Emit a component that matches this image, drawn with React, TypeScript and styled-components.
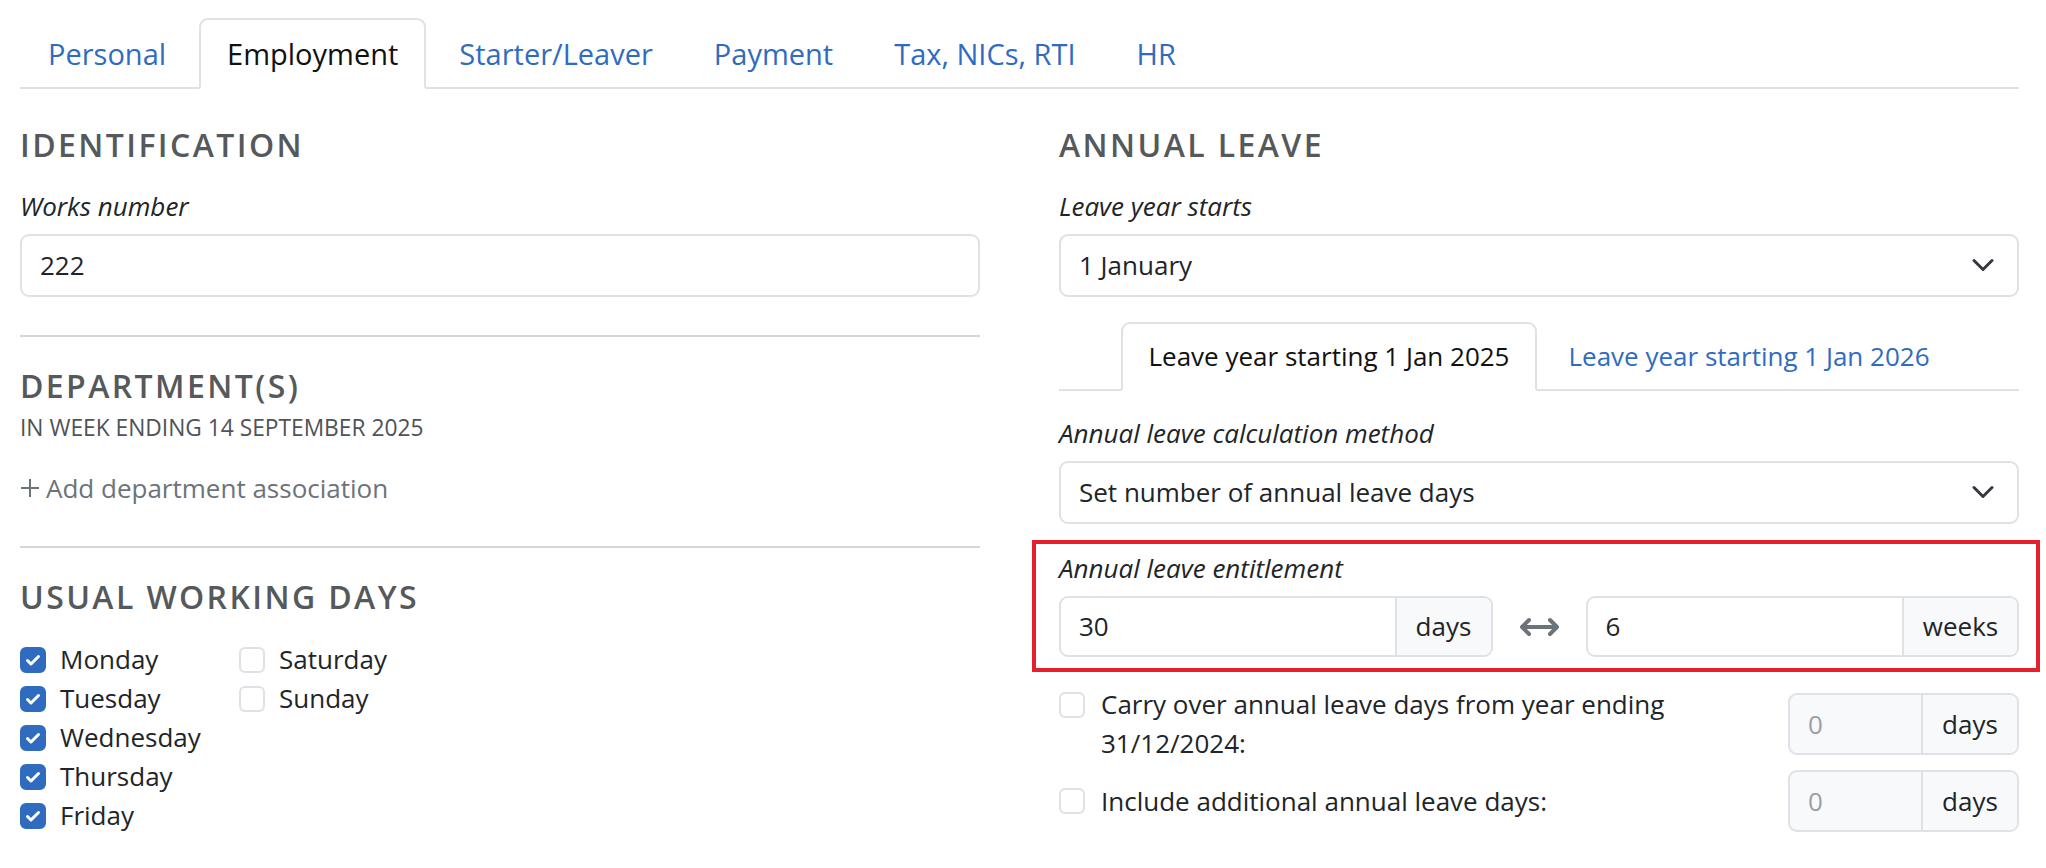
import React from 'react';
import styled, { createGlobalStyle } from 'styled-components';

const GlobalStyle = createGlobalStyle`
  * { box-sizing: border-box; }
  body {
    margin: 0;
    background: #fff;
    color: #212529;
    font-family: "Open Sans", "Noto Sans", sans-serif;
    font-size: 26px;
    line-height: 1.5;
  }
`;

const Page = styled.div`
  padding: 18px 27px 0 20px;
`;

const TabBar = styled.nav<{ $centered?: boolean }>`
  display: flex;
  gap: 5px;
  justify-content: ${(p) => (p.$centered ? 'center' : 'flex-start')};
  border-bottom: 2px solid #dee2e6;
`;

const Tab = styled.div<{ $active?: boolean; $small?: boolean }>`
  margin-bottom: -2px;
  padding: ${(p) => (p.$small ? '13px 25px' : '12px 26px')};
  font-size: ${(p) => (p.$small ? '26px' : '29px')};
  line-height: ${(p) => (p.$small ? '39px' : '43px')};
  white-space: nowrap;
  color: ${(p) => (p.$active ? '#111' : '#2f6cbf')};
  background: ${(p) => (p.$active ? '#fff' : 'transparent')};
  border: 2px solid ${(p) => (p.$active ? '#dee2e6' : 'transparent')};
  border-bottom-color: ${(p) => (p.$active ? '#fff' : 'transparent')};
  border-radius: 9px 9px 0 0;
`;

const Columns = styled.div`
  display: grid;
  grid-template-columns: 1fr 1fr;
  column-gap: 79px;
  padding-top: 37px;
`;

const Column = styled.div`
  display: flex;
  flex-direction: column;
`;

const SectionTitle = styled.h2`
  margin: 0 0 23px;
  font-size: 32px;
  font-weight: 600;
  line-height: 1.2;
  letter-spacing: 2.4px;
  text-transform: uppercase;
  color: #56595c;
`;

const SubTitle = styled.div`
  margin: -18px 0 24px;
  font-size: 22.75px;
  text-transform: uppercase;
  color: #4f5357;
`;

const Label = styled.div`
  margin-bottom: 8px;
  font-style: italic;
  color: #212529;
`;

const TextBox = styled.div`
  display: flex;
  align-items: center;
  justify-content: space-between;
  height: 63px;
  padding: 0 23px 0 18px;
  border: 2px solid #dee2e6;
  border-radius: 9px;
  background: #fff;
`;

const Divider = styled.hr`
  margin: 38px 0 30px;
  border: 0;
  border-top: 2px solid #d3d7db;
`;

const AddLink = styled.div`
  display: flex;
  align-items: center;
  gap: 6px;
  color: #6c737a;
`;

const DaysGrid = styled.div`
  display: grid;
  grid-template-columns: 219px auto;
  justify-content: start;
  margin-top: 1px;
`;

const DayList = styled.div`
  display: flex;
  flex-direction: column;
`;

const CheckRow = styled.label`
  display: flex;
  align-items: flex-start;
  gap: 14px;
`;

const Box = styled.span<{ $checked?: boolean }>`
  flex: none;
  display: flex;
  align-items: center;
  justify-content: center;
  width: 26px;
  height: 26px;
  margin-top: 6.5px;
  border-radius: 6px;
  border: 2px solid ${(p) => (p.$checked ? '#2f6cbf' : '#dee2e6')};
  background: ${(p) => (p.$checked ? '#2f6cbf' : '#fff')};
`;

const Tabs2 = styled.div`
  margin: 25px 0 23px;
`;

const Highlight = styled.div`
  margin: 16px -21px 0 -27px;
  padding: 5px 17px 11px 23px;
  border: 4px solid #e5202b;
`;

const EntitlementRow = styled.div`
  display: grid;
  grid-template-columns: 1fr auto 1fr;
  align-items: center;
  column-gap: 26px;
`;

const Group = styled.div<{ $disabled?: boolean; $width?: number }>`
  display: flex;
  height: ${(p) => (p.$disabled ? '62px' : '61px')};
  width: ${(p) => (p.$width ? `${p.$width}px` : 'auto')};
  border: 2px solid #dee2e6;
  border-radius: 9px;
  overflow: hidden;
  background: ${(p) => (p.$disabled ? '#f8f9fa' : '#fff')};
`;

const GroupInput = styled.div<{ $muted?: boolean }>`
  flex: 1;
  display: flex;
  align-items: center;
  padding: 0 18px;
  color: ${(p) => (p.$muted ? '#9a9fa4' : '#212529')};
`;

const Addon = styled.div<{ $w: number }>`
  flex: none;
  width: ${(p) => p.$w}px;
  display: flex;
  align-items: center;
  justify-content: center;
  border-left: 2px solid #dee2e6;
  background: #f8f9fa;
  color: #212529;
`;

const OptionRows = styled.div`
  display: flex;
  flex-direction: column;
  gap: 7px;
  margin-top: 13px;
`;

const OptionRow = styled.div`
  display: grid;
  grid-template-columns: 2fr 1fr;
  align-items: center;
`;

const OptionLabel = styled.label`
  display: flex;
  align-items: flex-start;
  gap: 16px;
`;

const RightGroup = styled.div`
  justify-self: end;
`;

const Check = () => (
  <svg width="16" height="14" viewBox="0 0 16 14">
    <path d="M2.5 7.5 L6 11 L13.5 3.5" fill="none" stroke="#fff" strokeWidth="3" strokeLinecap="round" strokeLinejoin="round" />
  </svg>
);

const Chevron = () => (
  <svg width="22" height="15" viewBox="0 0 22 15">
    <path d="M2 2.5 L11 11.5 L20 2.5" fill="none" stroke="#343a40" strokeWidth="3" strokeLinecap="round" strokeLinejoin="round" />
  </svg>
);

const SwapArrow = () => (
  <svg width="41" height="26" viewBox="0 0 41 26">
    <path d="M3 13 H38 M10 6 L3 13 L10 20 M31 6 L38 13 L31 20" fill="none" stroke="#6c737a" strokeWidth="4" strokeLinecap="round" strokeLinejoin="round" />
  </svg>
);

const Plus = () => (
  <svg width="20" height="20" viewBox="0 0 20 20">
    <path d="M10 1 V19 M1 10 H19" stroke="#6c737a" strokeWidth="2" />
  </svg>
);

const Day = ({ name, checked }: { name: string; checked?: boolean }) => (
  <CheckRow>
    <Box $checked={checked}>{checked && <Check />}</Box>
    <span>{name}</span>
  </CheckRow>
);

const mainTabs = ['Personal', 'Employment', 'Starter/Leaver', 'Payment', 'Tax, NICs, RTI', 'HR'];

const App: React.FC = () => {
  return (
    <Page>
      <GlobalStyle />
      <TabBar>
        {mainTabs.map((t) => (
          <Tab key={t} $active={t === 'Employment'}>{t}</Tab>
        ))}
      </TabBar>

      <Columns>
        <Column>
          <SectionTitle>Identification</SectionTitle>
          <Label>Works number</Label>
          <TextBox>222</TextBox>

          <Divider />

          <SectionTitle>Department(s)</SectionTitle>
          <SubTitle>In week ending 14 September 2025</SubTitle>
          <AddLink>
            <Plus />
            Add department association
          </AddLink>

          <Divider />

          <SectionTitle>Usual working days</SectionTitle>
          <DaysGrid>
            <DayList>
              <Day name="Monday" checked />
              <Day name="Tuesday" checked />
              <Day name="Wednesday" checked />
              <Day name="Thursday" checked />
              <Day name="Friday" checked />
            </DayList>
            <DayList>
              <Day name="Saturday" />
              <Day name="Sunday" />
            </DayList>
          </DaysGrid>
        </Column>

        <Column>
          <SectionTitle>Annual leave</SectionTitle>
          <Label>Leave year starts</Label>
          <TextBox>
            1 January
            <Chevron />
          </TextBox>

          <Tabs2>
            <TabBar $centered>
              <Tab $small $active>Leave year starting 1 Jan 2025</Tab>
              <Tab $small>Leave year starting 1 Jan 2026</Tab>
            </TabBar>
          </Tabs2>

          <Label>Annual leave calculation method</Label>
          <TextBox>
            Set number of annual leave days
            <Chevron />
          </TextBox>

          <Highlight>
            <Label>Annual leave entitlement</Label>
            <EntitlementRow>
              <Group>
                <GroupInput>30</GroupInput>
                <Addon $w={96}>days</Addon>
              </Group>
              <SwapArrow />
              <Group>
                <GroupInput>6</GroupInput>
                <Addon $w={115}>weeks</Addon>
              </Group>
            </EntitlementRow>
          </Highlight>

          <OptionRows>
            <OptionRow>
              <OptionLabel>
                <Box />
                <span>Carry over annual leave days from year ending 31/12/2024:</span>
              </OptionLabel>
              <RightGroup>
                <Group $disabled $width={231}>
                  <GroupInput $muted>0</GroupInput>
                  <Addon $w={96}>days</Addon>
                </Group>
              </RightGroup>
            </OptionRow>
            <OptionRow>
              <OptionLabel>
                <Box />
                <span>Include additional annual leave days:</span>
              </OptionLabel>
              <RightGroup>
                <Group $disabled $width={231}>
                  <GroupInput $muted>0</GroupInput>
                  <Addon $w={96}>days</Addon>
                </Group>
              </RightGroup>
            </OptionRow>
          </OptionRows>
        </Column>
      </Columns>
    </Page>
  );
};

export default App;
